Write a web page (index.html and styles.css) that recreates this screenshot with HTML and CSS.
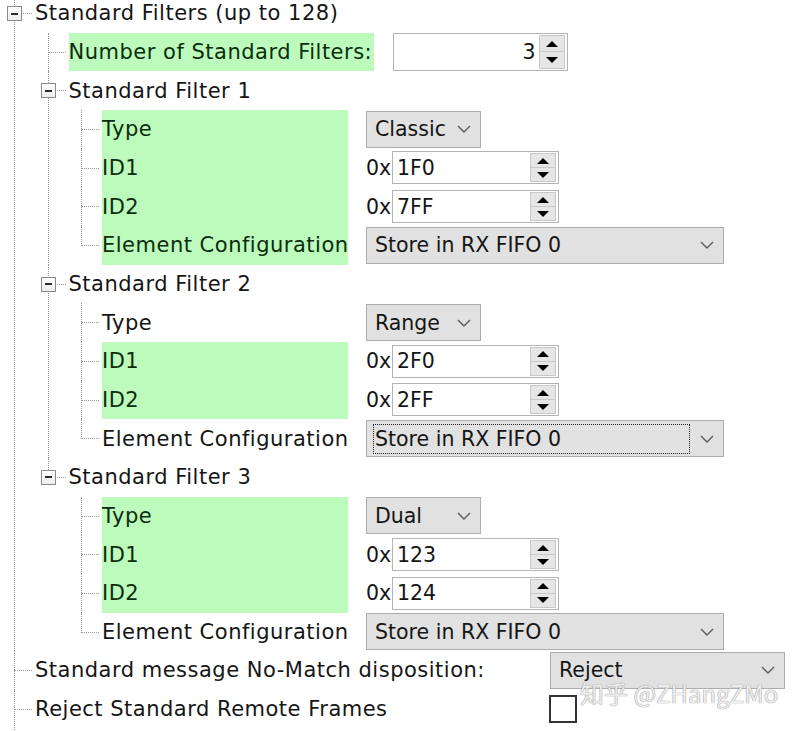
FILE: index.html
```html
<!DOCTYPE html>
<html>
<head>
<meta charset="utf-8">
<title>Standard Filters</title>
<link rel="stylesheet" href="styles.css">
</head>
<body>
<div class="view">
  <ul class="tree root">
    <li>
      <div class="row"><span class="exp"></span><span class="lbl">Standard Filters (up to 128)</span></div>
      <ul class="tree">
        <li>
          <div class="row">
            <span class="lbl w1 hl">Number of Standard Filters:</span>
            <div class="spin num"><span class="val">3</span><span class="btns"><span class="up"></span><span class="dn"></span></span></div>
          </div>
        </li>
        <li>
          <div class="row"><span class="exp"></span><span class="lbl">Standard Filter 1</span></div>
          <ul class="tree">
            <li><div class="row"><span class="lbl w2 hl">Type</span>
              <div class="combo short"><span class="txt">Classic</span><svg class="chev" width="14" height="8" viewBox="0 0 14 8"><polyline points="1,1 7,7 13,1"/></svg></div></div></li>
            <li><div class="row"><span class="lbl w2 hl">ID1</span>
              <div class="hex"><span class="px">0x</span><div class="spin id"><span class="val">1F0</span><span class="btns"><span class="up"></span><span class="dn"></span></span></div></div></div></li>
            <li><div class="row"><span class="lbl w2 hl">ID2</span>
              <div class="hex"><span class="px">0x</span><div class="spin id"><span class="val">7FF</span><span class="btns"><span class="up"></span><span class="dn"></span></span></div></div></div></li>
            <li><div class="row"><span class="lbl w2 hl">Element Configuration</span>
              <div class="combo long"><span class="txt">Store in RX FIFO 0</span><svg class="chev" width="14" height="8" viewBox="0 0 14 8"><polyline points="1,1 7,7 13,1"/></svg></div></div></li>
          </ul>
        </li>
        <li>
          <div class="row"><span class="exp"></span><span class="lbl">Standard Filter 2</span></div>
          <ul class="tree">
            <li><div class="row"><span class="lbl w2">Type</span>
              <div class="combo short"><span class="txt">Range</span><svg class="chev" width="14" height="8" viewBox="0 0 14 8"><polyline points="1,1 7,7 13,1"/></svg></div></div></li>
            <li><div class="row"><span class="lbl w2 hl">ID1</span>
              <div class="hex"><span class="px">0x</span><div class="spin id"><span class="val">2F0</span><span class="btns"><span class="up"></span><span class="dn"></span></span></div></div></div></li>
            <li><div class="row"><span class="lbl w2 hl">ID2</span>
              <div class="hex"><span class="px">0x</span><div class="spin id"><span class="val">2FF</span><span class="btns"><span class="up"></span><span class="dn"></span></span></div></div></div></li>
            <li><div class="row"><span class="lbl w2">Element Configuration</span>
              <div class="combo long"><span class="txt focus">Store in RX FIFO 0</span><svg class="chev" width="14" height="8" viewBox="0 0 14 8"><polyline points="1,1 7,7 13,1"/></svg></div></div></li>
          </ul>
        </li>
        <li>
          <div class="row"><span class="exp"></span><span class="lbl">Standard Filter 3</span></div>
          <ul class="tree">
            <li><div class="row"><span class="lbl w2 hl">Type</span>
              <div class="combo short"><span class="txt">Dual</span><svg class="chev" width="14" height="8" viewBox="0 0 14 8"><polyline points="1,1 7,7 13,1"/></svg></div></div></li>
            <li><div class="row"><span class="lbl w2 hl">ID1</span>
              <div class="hex"><span class="px">0x</span><div class="spin id"><span class="val">123</span><span class="btns"><span class="up"></span><span class="dn"></span></span></div></div></div></li>
            <li><div class="row"><span class="lbl w2 hl">ID2</span>
              <div class="hex"><span class="px">0x</span><div class="spin id"><span class="val">124</span><span class="btns"><span class="up"></span><span class="dn"></span></span></div></div></div></li>
            <li><div class="row"><span class="lbl w2">Element Configuration</span>
              <div class="combo long"><span class="txt">Store in RX FIFO 0</span><svg class="chev" width="14" height="8" viewBox="0 0 14 8"><polyline points="1,1 7,7 13,1"/></svg></div></div></li>
          </ul>
        </li>
      </ul>
    </li>
    <li>
      <div class="row"><span class="lbl w0">Standard message No-Match disposition:</span>
        <div class="combo rej"><span class="txt">Reject</span><svg class="chev" width="14" height="8" viewBox="0 0 14 8"><polyline points="1,1 7,7 13,1"/></svg></div></div>
    </li>
    <li>
      <div class="row"><span class="lbl w0">Reject Standard Remote Frames</span>
        <span class="check"></span></div>
    </li>
  </ul>
</div>
<div class="watermark">知乎 @ZHangZMo</div>
</body>
</html>
```
FILE: styles.css
```css
* { box-sizing: border-box; }
html, body { margin: 0; padding: 0; background: #fff; }
body {
  display: flow-root;
  width: 796px;
  height: 731px;
  overflow: hidden;
  position: relative;
  font-family: "DejaVu Sans", Verdana, sans-serif;
  font-size: 21px;
  letter-spacing: 0.5px;
  color: #151515;
}
.view { margin-top: -6px; }

.tree { list-style: none; margin: 0; padding: 0 0 0 12.5px; }
.tree.root { padding-left: 14px; }
.tree > li { position: relative; padding-left: 21px; }
.tree > li::before {
  content: "";
  position: absolute;
  left: 0; top: 0; bottom: 0;
  border-left: 1px dotted #999;
}
.tree > li:last-child::before { bottom: auto; height: 20px; }
.tree.root > li:last-child::before { bottom: -12px; height: auto; }

.row {
  position: relative;
  display: flex;
  align-items: center;
  height: 38.67px;
  gap: 18px;
}
.row::before {
  content: "";
  position: absolute;
  left: -21px; top: 19px;
  width: 18px;
  border-top: 1px dotted #999;
}
.exp {
  position: absolute;
  left: -28px; top: 12px;
  width: 15px; height: 15px;
  border: 1px solid #8a8a8a;
  background: linear-gradient(#fff, #ededed);
  z-index: 1;
}
.exp::after {
  content: "";
  position: absolute;
  left: 3px; top: 5.5px;
  width: 7px; height: 2px;
  background: #2a2a2a;
}

.lbl { white-space: nowrap; height: 100%; display: flex; align-items: center; }
.w0 { width: 497px; }
.w1 { width: 305px; }
.w2 { width: 246px; }
.w1 + .spin { margin-left: 1px; }
.hl { background: #bcfbbc; color: #0c2c0c; }

.combo {
  height: 37px;
  border: 1px solid #adadad;
  background: #e1e1e1;
  display: flex;
  align-items: center;
  gap: 10px;
  padding: 0 9px 0 6px;
  font-size: 20.5px;
  letter-spacing: 0;
  color: #151515;
}
.combo .txt {
  flex: 1;
  height: 30px;
  display: flex;
  align-items: center;
  padding-left: 1px;
  border: 1px dotted transparent;
  white-space: nowrap;
}
.combo .txt.focus { border-color: #222; }
.combo.short { width: 115px; }
.combo.long { width: 358px; }
.combo.rej { width: 235px; }
.chev { flex: none; }
.chev polyline { fill: none; stroke: #5a5a5a; stroke-width: 1.4; }

.hex { display: flex; align-items: center; gap: 1px; font-size: 20.5px; letter-spacing: 0; }
.px { width: 25px; }
.spin {
  display: flex;
  align-items: center;
  background: #fff;
  border: 1px solid #b4b4b4;
  font-size: 20.5px;
  letter-spacing: 0;
}
.spin.id { width: 167px; height: 33px; }
.spin.num { width: 175px; height: 38px; }
.spin .val { flex: 1; padding-left: 4px; }
.spin.num .val { text-align: right; padding-right: 3px; }
.btns {
  width: 28px;
  height: 100%;
  display: flex;
  flex-direction: column;
  padding: 1px 2px 1px 0;
}
.btns span {
  flex: 1;
  background: #e6e6e6;
  border: 1px solid #c9c9c9;
  display: flex;
  align-items: center;
  justify-content: center;
}
.btns .up { border-bottom-width: 0; }
.up::after {
  content: "";
  border-left: 6px solid transparent;
  border-right: 6px solid transparent;
  border-bottom: 6px solid #000;
}
.dn::after {
  content: "";
  border-left: 6px solid transparent;
  border-right: 6px solid transparent;
  border-top: 6px solid #000;
}

.check {
  width: 28px; height: 28px;
  border: 2px solid #333;
  background: #fff;
  margin-left: -1px;
}

.watermark {
  position: absolute;
  left: 580px; top: 679px;
  font-family: "Noto Sans CJK SC", "Noto Sans", sans-serif;
  font-size: 24px;
  line-height: 28px;
  letter-spacing: 0;
  color: rgba(255, 255, 255, 0.85);
  text-shadow: 0 0 1px #8a8a8a, 0 0 1px #9a9a9a;
  white-space: nowrap;
}
```
